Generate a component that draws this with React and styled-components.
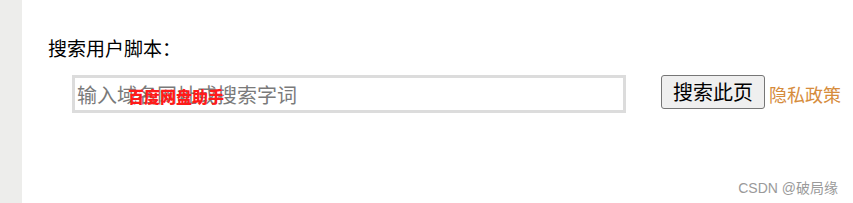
import React from "react";
import styled, { createGlobalStyle } from "styled-components";

const Global = createGlobalStyle`
  html, body { margin: 0; padding: 0; background: #fff; }
  body { font-family: "Microsoft YaHei", "Noto Sans CJK SC", sans-serif; }
`;

const CJK = `"Noto Sans CJK SC", "Noto Sans", sans-serif`;

const Page = styled.div`
  display: flex;
  width: 853px;
  height: 203px;
  overflow: hidden;
`;

const Strip = styled.div`
  width: 22px;
  flex: none;
  background: #ededeb;
`;

const Main = styled.div`
  flex: 1;
  display: flex;
  flex-direction: column;
  padding: 36px 0 0 26px;
`;

const Label = styled.div`
  font-family: ${CJK};
  font-size: 19px;
  line-height: 24px;
  color: #000;
`;

const SearchRow = styled.div`
  display: flex;
  align-items: center;
  margin-top: 15px;
  padding-left: 24px;
`;

const Field = styled.div`
  position: relative;
  width: 554px;
  height: 38px;
  box-sizing: border-box;
  border: 3px solid #dcdcdc;
  flex: none;
`;

const Input = styled.input`
  width: 100%;
  height: 100%;
  box-sizing: border-box;
  border: none;
  outline: none;
  padding: 0 0 0 2px;
  font-family: ${CJK};
  font-size: 20px;
  color: #333;
  background: #fff;
  &::placeholder { color: #7a7a7a; }
`;

const Badge = styled.span`
  position: absolute;
  left: 53px;
  top: 8px;
  font-family: ${CJK};
  font-size: 16px;
  font-weight: 900;
  line-height: 20px;
  color: #ff1a1a;
  pointer-events: none;
`;

const Button = styled.button`
  margin-left: 35px;
  height: 34px;
  width: 104px;
  box-sizing: border-box;
  border: 1px solid #767676;
  border-radius: 3px;
  background: #efefef;
  font-family: ${CJK};
  font-size: 20px;
  line-height: 24px;
  color: #000;
  padding: 0;
  align-self: flex-start;
`;

const PolicyLink = styled.a`
  margin-left: 4px;
  font-family: ${CJK};
  font-size: 18px;
  line-height: 24px;
  color: #d68c3c;
  text-decoration: none;
  align-self: flex-start;
  margin-top: 7px;
`;

const Footer = styled.div`
  margin-top: auto;
  align-self: flex-end;
  padding: 0 15px 6px 0;
  font-family: "Liberation Sans", ${CJK};
  font-size: 14px;
  line-height: 17px;
  color: #9a9a9a;
`;

export default function App() {
  return (
    <>
      <Global />
      <Page>
        <Strip />
        <Main>
          <Label>搜索用户脚本：</Label>
          <SearchRow>
            <Field>
              <Input placeholder="输入域名网址或搜索字词" />
              <Badge>百度网盘助手</Badge>
            </Field>
            <Button>搜索此页</Button>
            <PolicyLink href="#">隐私政策</PolicyLink>
          </SearchRow>
          <Footer>CSDN @破局缘</Footer>
        </Main>
      </Page>
    </>
  );
}
